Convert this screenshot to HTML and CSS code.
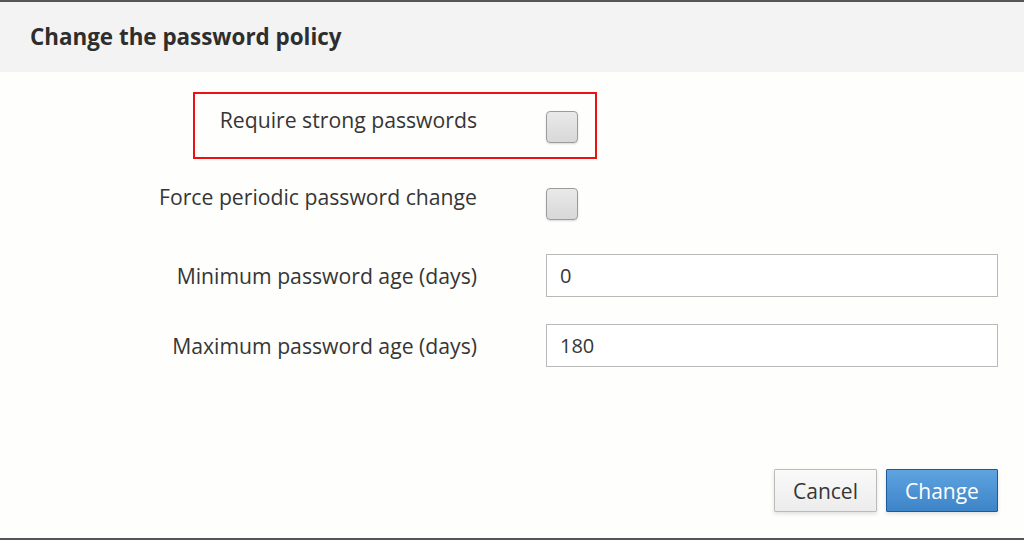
FILE: index.html
```html
<!DOCTYPE html>
<html>
<head>
<meta charset="utf-8">
<link rel="stylesheet" href="styles.css">
</head>
<body>
<div class="dialog">
  <div class="header"><h1 class="title">Change the password policy</h1></div>
  <div class="body">
    <div class="form">
      <div class="highlight"></div>
      <div class="row row-check row-1">
        <label class="label">Require strong passwords</label>
        <div class="control"><span class="checkbox"></span></div>
      </div>
      <div class="row row-check row-2">
        <label class="label">Force periodic password change</label>
        <div class="control"><span class="checkbox"></span></div>
      </div>
      <div class="row row-3">
        <label class="label">Minimum password age (days)</label>
        <div class="control"><div class="input">0</div></div>
      </div>
      <div class="row row-4">
        <label class="label">Maximum password age (days)</label>
        <div class="control"><div class="input">180</div></div>
      </div>
    </div>
    <div class="footer">
      <button class="btn btn-default">Cancel</button>
      <button class="btn btn-primary">Change</button>
    </div>
  </div>
</div>
</body>
</html>
```
FILE: styles.css
```css
html, body {
  margin: 0;
  padding: 0;
  background: #fefefd;
}
body {
  font-family: "Open Sans", "Liberation Sans", sans-serif;
  color: #363636;
  width: 1024px;
  height: 540px;
  overflow: hidden;
}
.dialog {
  box-sizing: border-box;
  height: 540px;
  border-top: 2px solid #555555;
  border-bottom: 2px solid #555555;
  display: flex;
  flex-direction: column;
}
.header {
  background: #f3f3f3;
  height: 70px;
  display: flex;
  align-items: center;
  padding-left: 30px;
}
.title {
  margin: 0 0 2px 0;
  font-size: 22.4px;
  font-weight: 700;
  color: #2e2e2e;
}
.body {
  flex: 1;
  display: flex;
  flex-direction: column;
  justify-content: space-between;
}
.form {
  position: relative;
  padding-top: 39px;
}
.highlight {
  position: absolute;
  left: 193px;
  top: 20px;
  width: 400px;
  height: 63px;
  border: 2px solid #ee1111;
}
.row {
  display: grid;
  grid-template-columns: 477px 452px;
  column-gap: 69px;
  align-items: center;
}
.row-check {
  align-items: start;
}
.row-check .label {
  line-height: 28px;
  margin-top: -5px;
}
.row-2 { margin-top: 45px; }
.row-3 { margin-top: 34px; }
.row-4 { margin-top: 27px; }
.label {
  text-align: right;
  font-size: 21.2px;
  color: #363636;
}
.control {
  display: flex;
  align-items: center;
}
.checkbox {
  display: block;
  box-sizing: border-box;
  width: 32px;
  height: 32px;
  border: 1.5px solid #9c9c9c;
  border-radius: 4px;
  background: linear-gradient(#e9e9e9, #d8d8d8);
  box-shadow: 0 1px 2px rgba(0,0,0,0.15);
}
.input {
  box-sizing: border-box;
  width: 452px;
  height: 43px;
  border: 1.5px solid #b9b9b9;
  background: #ffffff;
  padding-left: 13px;
  font-size: 20px;
  display: flex;
  align-items: center;
  color: #363636;
}
.footer {
  display: flex;
  justify-content: flex-end;
  gap: 9px;
  padding-right: 26px;
  padding-bottom: 26px;
}
.btn {
  box-sizing: border-box;
  height: 43px;
  font-family: "Open Sans", "Liberation Sans", sans-serif;
  font-size: 21px;
  border-radius: 1px;
  padding: 0 10px;
  cursor: pointer;
}
.btn-default {
  width: 103px;
  background: linear-gradient(#fafafa, #ececec);
  border: 1.5px solid #bbbbbb;
  color: #363636;
  box-shadow: 0 2px 4px rgba(0,0,0,0.12);
}
.btn-primary {
  width: 112px;
  background: linear-gradient(#5fa3e0, #3d84c8);
  border: 1.5px solid #1d5a99;
  color: #ffffff;
  box-shadow: 0 2px 4px rgba(0,0,0,0.12);
}
```
